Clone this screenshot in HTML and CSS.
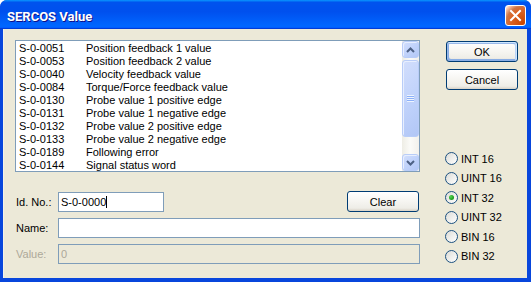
FILE: index.html
```html
<!DOCTYPE html>
<html lang="en">
<head>
  <meta charset="UTF-8">
  <title>SERCOS Value</title>
  <link rel="stylesheet" href="styles.css">
</head>
<body>
  <div class="window">
    <div class="titlebar">
      <span class="title">SERCOS Value</span>
      <button class="close" aria-label="Close">
        <svg width="19" height="19" viewBox="0 0 19 19">
          <path d="M5 5 L14 14 M14 5 L5 14" stroke="#fff" stroke-width="2" stroke-linecap="square"/>
        </svg>
      </button>
    </div>

    <div class="client">
      <div class="main">
        <div class="listbox">
          <ul class="items">
            <li><span class="id">S-0-0051</span><span>Position feedback 1 value</span></li>
            <li><span class="id">S-0-0053</span><span>Position feedback 2 value</span></li>
            <li><span class="id">S-0-0040</span><span>Velocity feedback value</span></li>
            <li><span class="id">S-0-0084</span><span>Torque/Force feedback value</span></li>
            <li><span class="id">S-0-0130</span><span>Probe value 1 positive edge</span></li>
            <li><span class="id">S-0-0131</span><span>Probe value 1 negative edge</span></li>
            <li><span class="id">S-0-0132</span><span>Probe value 2 positive edge</span></li>
            <li><span class="id">S-0-0133</span><span>Probe value 2 negative edge</span></li>
            <li><span class="id">S-0-0189</span><span>Following error</span></li>
            <li><span class="id">S-0-0144</span><span>Signal status word</span></li>
          </ul>
          <div class="scrollbar">
            <div class="sb-btn">
              <svg width="9" height="6" viewBox="0 0 9 6"><path d="M1 5 L4.5 1.5 L8 5" fill="none" stroke="#4d6185" stroke-width="2"/></svg>
            </div>
            <div class="sb-track">
              <div class="sb-thumb">
                <span class="grip"></span>
              </div>
            </div>
            <div class="sb-btn">
              <svg width="9" height="6" viewBox="0 0 9 6"><path d="M1 1 L4.5 4.5 L8 1" fill="none" stroke="#4d6185" stroke-width="2"/></svg>
            </div>
          </div>
        </div>

        <div class="fields">
          <div class="field first">
            <label>Id. No.:</label>
            <div class="input short">S-0-0000<span class="caret"></span></div>
            <button class="btn clear">Clear</button>
          </div>
          <div class="field">
            <label>Name:</label>
            <div class="input"></div>
          </div>
          <div class="field disabled">
            <label>Value:</label>
            <div class="input">0</div>
          </div>
        </div>
      </div>

      <div class="side">
        <button class="btn default">OK</button>
        <button class="btn">Cancel</button>

        <div class="radios">
          <div class="radio"><span class="dot"></span>INT 16</div>
          <div class="radio"><span class="dot"></span>UINT 16</div>
          <div class="radio checked"><span class="dot"></span>INT 32</div>
          <div class="radio"><span class="dot"></span>UINT 32</div>
          <div class="radio"><span class="dot"></span>BIN 16</div>
          <div class="radio"><span class="dot"></span>BIN 32</div>
        </div>
      </div>
    </div>
  </div>
</body>
</html>
```

FILE: styles.css
```css
* {
  box-sizing: border-box;
}

body {
  margin: 0;
  background: #fff;
  font-family: "Liberation Sans", Arial, sans-serif;
  font-size: 11px;
  color: #000;
}

.window {
  width: 531px;
  height: 282px;
  display: flex;
  flex-direction: column;
  background: #0846dc;
  border-radius: 7px 7px 0 0;
  overflow: hidden;
}

/* title bar */
.titlebar {
  height: 29px;
  flex: none;
  display: flex;
  align-items: flex-start;
  padding: 5px 5px 0 7px;
  background: linear-gradient(180deg, #0997ff 0%, #0053ee 8%, #0050ee 40%, #0066ff 88%, #0066ff 93%, #005bff 95%, #003dd7 96%, #003dd7 100%);
}

.title {
  flex: 1;
  padding-top: 1px;
  font: bold 13px/21px Roboto, "Liberation Sans", sans-serif;
  color: #fff;
  text-shadow: 1px 1px #0f1089;
}

.close {
  width: 21px;
  height: 21px;
  padding: 0;
  border: 1px solid #fff;
  border-radius: 3px;
  background: radial-gradient(circle at 90% 90%, #cc4600 0%, #dc6527 55%, #cd7546 70%, #ffccb2 90%, #fff 100%);
  display: flex;
  align-items: center;
  justify-content: center;
}

/* dialog body */
.client {
  flex: 1;
  margin: 0 4px 4px 3px;
  padding: 11px 0 0 11px;
  background: #ece9d8;
  display: flex;
  border-left: 1px solid #f4f2e8;
}

.main {
  width: 405px;
  display: flex;
  flex-direction: column;
}

.listbox {
  height: 132px;
  border: 1px solid #7f9db9;
  background: #fff;
  display: flex;
}

.items {
  flex: 1;
  list-style: none;
  margin: 0;
  padding: 1px 0 0 3px;
  overflow: hidden;
}

.items li {
  height: 13px;
  line-height: 13px;
  display: flex;
  white-space: nowrap;
}

.items .id {
  width: 67px;
  flex: none;
}

.scrollbar {
  width: 17px;
  flex: none;
  display: flex;
  flex-direction: column;
  background: linear-gradient(90deg, #eeede5 0%, #fbfbf8 50%, #f3f1ec 100%);
}

.sb-btn,
.sb-thumb {
  border: 1px solid #b9cdf8;
  border-radius: 3px;
  background: linear-gradient(135deg, #d2defc 0%, #c1d3fb 50%, #b2c7f6 100%);
  box-shadow: inset 1px 1px #e8effe;
}

.sb-btn {
  height: 17px;
  flex: none;
  display: flex;
  align-items: center;
  justify-content: center;
}

.sb-track {
  flex: 1;
  padding-top: 2px;
}

.sb-thumb {
  height: 77px;
  display: flex;
  align-items: center;
  justify-content: center;
}

.grip {
  width: 7px;
  height: 7px;
  background: repeating-linear-gradient(180deg, #eef4fe 0px, #eef4fe 1px, #8cb0f8 1px, #8cb0f8 2px);
}

/* fields */
.fields {
  margin-top: 19px;
  display: flex;
  flex-direction: column;
  gap: 6px;
}

.field {
  height: 20px;
  display: flex;
  align-items: center;
}

.field.first {
  height: 21px;
}

.field label {
  width: 43px;
  flex: none;
  padding-left: 1px;
}

.input {
  flex: 1;
  height: 20px;
  border: 1px solid #7f9db9;
  background: #fff;
  padding: 0 2px;
  line-height: 18px;
  white-space: nowrap;
}

.input.short {
  flex: none;
  width: 106px;
}

.caret {
  display: inline-block;
  width: 1px;
  height: 12px;
  background: #000;
  vertical-align: -2px;
}

.field.disabled label,
.field.disabled .input {
  color: #aca899;
}

.field.disabled .input {
  background: #ece9d8;
}

/* buttons */
.btn {
  height: 21px;
  padding: 0;
  font: 11px "Liberation Sans", Arial, sans-serif;
  color: #000;
  border: 1px solid #003c74;
  border-radius: 3px;
  background: linear-gradient(180deg, #fff 0%, #f6f5f1 50%, #eeede7 85%, #d8d2c6 100%);
}

.clear {
  width: 72px;
  margin-left: auto;
  margin-right: 1px;
}

.btn.default {
  box-shadow: inset -1px 1px #cee7ff, inset 1px 2px #98b8ea, inset -2px 2px #bcd4f6, inset 1px -1px #89ade4, inset 2px -2px #89ade4;
}

/* right column */
.side {
  width: 72px;
  margin-left: 26px;
  padding-top: 1px;
  display: flex;
  flex-direction: column;
}

.side .btn + .btn {
  margin-top: 7px;
}

.radios {
  margin-top: 59px;
  margin-left: -1px;
}

.radio {
  height: 19.5px;
  display: flex;
  align-items: center;
  gap: 3px;
  white-space: nowrap;
}

.dot {
  width: 13px;
  height: 13px;
  flex: none;
  border: 1px solid #1c5180;
  border-radius: 50%;
  background: linear-gradient(135deg, #dcdcd7 0%, #fff 100%);
  display: flex;
  align-items: center;
  justify-content: center;
}

.radio.checked .dot::after {
  content: "";
  width: 5px;
  height: 5px;
  border-radius: 50%;
  background: radial-gradient(circle at 35% 35%, #55d551 0%, #21a121 60%, #129212 100%);
}
```
